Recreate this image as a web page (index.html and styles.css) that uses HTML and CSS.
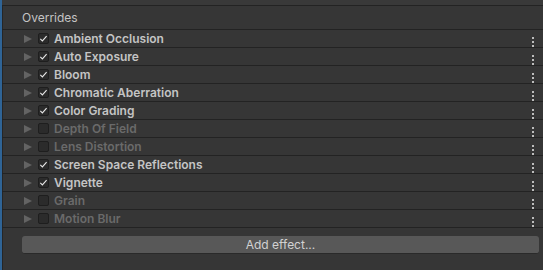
FILE: index.html
```html
<!DOCTYPE html>
<html lang="en">
<head>
    <meta charset="UTF-8">
    <title>Post-process Volume - Overrides</title>
    <link rel="stylesheet" href="styles.css">
</head>
<body>
    <div class="panel">
        <div class="top-strip"></div>
        <div class="header">Overrides</div>

        <div class="effect on">
            <span class="arrow"></span>
            <span class="check"><svg viewBox="0 0 9 9"><polyline points="1.3,4.8 3.4,6.9 7.6,2.2"/></svg></span>
            <span class="name">Ambient Occlusion</span>
            <span class="kebab"><i></i><i></i><i></i></span>
        </div>
        <div class="effect on">
            <span class="arrow"></span>
            <span class="check"><svg viewBox="0 0 9 9"><polyline points="1.3,4.8 3.4,6.9 7.6,2.2"/></svg></span>
            <span class="name">Auto Exposure</span>
            <span class="kebab"><i></i><i></i><i></i></span>
        </div>
        <div class="effect on">
            <span class="arrow"></span>
            <span class="check"><svg viewBox="0 0 9 9"><polyline points="1.3,4.8 3.4,6.9 7.6,2.2"/></svg></span>
            <span class="name">Bloom</span>
            <span class="kebab"><i></i><i></i><i></i></span>
        </div>
        <div class="effect on">
            <span class="arrow"></span>
            <span class="check"><svg viewBox="0 0 9 9"><polyline points="1.3,4.8 3.4,6.9 7.6,2.2"/></svg></span>
            <span class="name">Chromatic Aberration</span>
            <span class="kebab"><i></i><i></i><i></i></span>
        </div>
        <div class="effect on">
            <span class="arrow"></span>
            <span class="check"><svg viewBox="0 0 9 9"><polyline points="1.3,4.8 3.4,6.9 7.6,2.2"/></svg></span>
            <span class="name">Color Grading</span>
            <span class="kebab"><i></i><i></i><i></i></span>
        </div>
        <div class="effect off">
            <span class="arrow"></span>
            <span class="check"></span>
            <span class="name">Depth Of Field</span>
            <span class="kebab"><i></i><i></i><i></i></span>
        </div>
        <div class="effect off">
            <span class="arrow"></span>
            <span class="check"></span>
            <span class="name">Lens Distortion</span>
            <span class="kebab"><i></i><i></i><i></i></span>
        </div>
        <div class="effect on">
            <span class="arrow"></span>
            <span class="check"><svg viewBox="0 0 9 9"><polyline points="1.3,4.8 3.4,6.9 7.6,2.2"/></svg></span>
            <span class="name">Screen Space Reflections</span>
            <span class="kebab"><i></i><i></i><i></i></span>
        </div>
        <div class="effect on">
            <span class="arrow"></span>
            <span class="check"><svg viewBox="0 0 9 9"><polyline points="1.3,4.8 3.4,6.9 7.6,2.2"/></svg></span>
            <span class="name">Vignette</span>
            <span class="kebab"><i></i><i></i><i></i></span>
        </div>
        <div class="effect off">
            <span class="arrow"></span>
            <span class="check"></span>
            <span class="name">Grain</span>
            <span class="kebab"><i></i><i></i><i></i></span>
        </div>
        <div class="effect off">
            <span class="arrow"></span>
            <span class="check"></span>
            <span class="name">Motion Blur</span>
            <span class="kebab"><i></i><i></i><i></i></span>
        </div>

        <div class="actions">
            <button class="add-btn">Add effect...</button>
        </div>
    </div>
</body>
</html>
```

FILE: styles.css
```css
body {
    margin: 0;
    background: #363636;
    font-family: Inter, "Noto Sans", sans-serif;
    font-size: 12px;
    color: #c4c4c4;
}
.panel {
    height: 270px;
    border-left: 2px solid #2f6496;
    box-shadow: inset 1px 0 0 #262626;
    box-sizing: border-box;
}
.top-strip {
    height: 5px;
    background: #393939;
    border-bottom: 1px solid #232323;
}
.header {
    height: 23px;
    line-height: 24px;
    padding-left: 20px;
    border-bottom: 1px solid #232323;
}
.effect {
    display: flex;
    align-items: center;
    height: 17px;
    padding-left: 22px;
    padding-right: 9px;
    border-bottom: 1px solid #232323;
}
.arrow {
    width: 0;
    height: 0;
    border-top: 4.5px solid transparent;
    border-bottom: 4.5px solid transparent;
    border-left: 8px solid #636363;
    margin-right: 6px;
}
.check {
    width: 9px;
    height: 9px;
    border: 1px solid #1e1e1e;
    border-radius: 2px;
    background: #2b2b2b;
    margin-right: 5px;
    display: flex;
}
.check svg {
    width: 9px;
    height: 9px;
    fill: none;
    stroke: #e8e8e8;
    stroke-width: 1.1;
}
.name {
    font-weight: 600;
    line-height: 17px;
}
.off .name {
    color: #6a6a6a;
}
.kebab {
    margin-left: auto;
    margin-top: 6px;
    display: flex;
    flex-direction: column;
    gap: 2px;
}
.kebab i {
    display: block;
    width: 2px;
    height: 2px;
    background: #bdbdbd;
}
.actions {
    padding: 8px 4px 0 20px;
}
.add-btn {
    display: block;
    width: 100%;
    height: 18px;
    padding: 0;
    background: #585858;
    border: none;
    border-bottom: 1px solid #2a2a2a;
    border-radius: 3px;
    color: #d2d2d2;
    font-family: Inter, "Noto Sans", sans-serif;
    font-size: 12px;
}
```
